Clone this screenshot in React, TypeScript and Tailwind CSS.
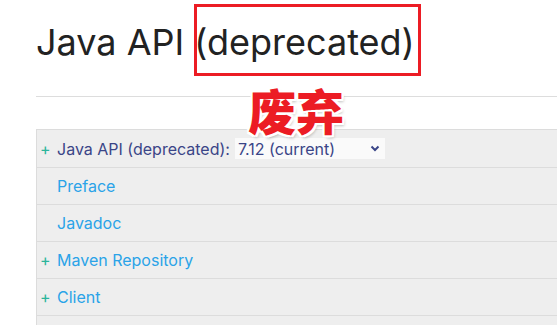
import React from "react";

const font = { fontFamily: "Inter, 'Noto Sans', sans-serif" };

function Row({ plus, children }: { plus?: boolean; children: React.ReactNode }) {
  return (
    <div className="flex h-[37px] items-center border-b border-[#dcdcdc]">
      <span className="w-[20px] pl-[3px] text-[16px] text-[#2bb59b]">{plus ? "+" : ""}</span>
      {children}
    </div>
  );
}

export default function App() {
  return (
    <div className="relative h-[325px] w-[557px] overflow-hidden bg-white" style={font}>
      <div className="pl-[36px]">
        <h1 className="pt-[20px] text-[36px] leading-[44px] text-[#222] font-normal whitespace-nowrap">
          Java API (deprecated)
        </h1>
        <div className="mt-[32px] h-px bg-[#dddddd]" />
        <div className="mt-[32px] border-l border-t border-[#dcdcdc] bg-[#eeeeee]">
          <div className="flex h-[38px] items-center border-b border-[#dcdcdc]">
            <span className="w-[20px] pl-[3px] text-[16px] text-[#2bb59b]">+</span>
            <span className="text-[16px] text-[#3a4587]">Java API (deprecated):</span>
            <div className="ml-[5px] flex h-[21px] w-[150px] items-center justify-between bg-[#fafafa] pl-[3px] pr-[5px]">
              <span className="text-[16px] text-[#3a4587]">7.12 (current)</span>
              <svg width="10" height="7" viewBox="0 0 10 7">
                <path d="M1.5 1.5 L5 5 L8.5 1.5" fill="none" stroke="#3a4587" strokeWidth="2" />
              </svg>
            </div>
          </div>
          <Row><span className="text-[16px] text-[#2aa3e8]">Preface</span></Row>
          <Row><span className="text-[16px] text-[#2aa3e8]">Javadoc</span></Row>
          <Row plus><span className="text-[16px] text-[#2aa3e8]">Maven Repository</span></Row>
          <Row plus><span className="text-[16px] text-[#2aa3e8]">Client</span></Row>
          <div className="h-[20px]" />
        </div>
      </div>
      <div className="absolute left-[194px] top-[4px] h-[72px] w-[227px] border-[3px] border-[#ec1c24]" />
      <div
        className="absolute left-[248px] top-[80px] text-[48px] font-black leading-[58px] text-[#ec1c24]"
        style={{
          fontFamily: "'Noto Sans CJK SC', sans-serif",
          textShadow:
            "2px 0 0 #fff, -2px 0 0 #fff, 0 2px 0 #fff, 0 -2px 0 #fff, 2px 2px 0 #fff, -2px -2px 0 #fff, 2px -2px 0 #fff, -2px 2px 0 #fff, 2px 3px 3px rgba(0,0,0,0.25)",
        }}
      >
        废弃
      </div>
    </div>
  );
}
